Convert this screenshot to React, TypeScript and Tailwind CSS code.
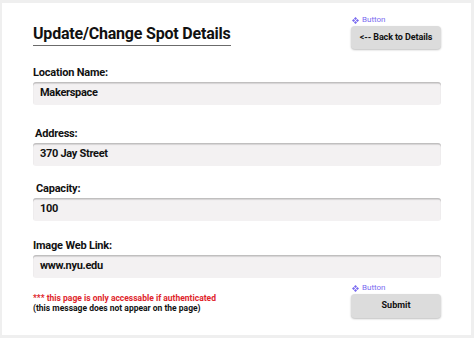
import React from "react";

function ButtonTag() {
  return (
    <div className="flex h-[10px] items-center gap-[3px] pl-[1px] text-[8px] leading-none text-[#7a6bf0]">
      <svg width="7" height="7" viewBox="0 0 10 10">
        <path d="M5 0 L7.2 2.2 L5 4.4 L2.8 2.2 Z M5 5.6 L7.2 7.8 L5 10 L2.8 7.8 Z M0 5 L2.2 2.8 L4.4 5 L2.2 7.2 Z M5.6 5 L7.8 2.8 L10 5 L7.8 7.2 Z" fill="#7a6bf0" />
      </svg>
      <span>Button</span>
    </div>
  );
}

function Field({ label, value, labelPad = "pl-0" }: { label: string; value: string; labelPad?: string }) {
  return (
    <div className="flex flex-col">
      <div className={`h-[12px] text-[11px] font-bold leading-[12px] tracking-[-0.2px] text-[#111] ${labelPad}`}>{label}</div>
      <div className="mt-[3px] flex h-[23px] w-[408px] items-center rounded-[3px] bg-[#f3f1f2] pl-[7px] text-[11px] font-bold tracking-[-0.3px] text-[#111] shadow-[inset_0_1.5px_1px_rgba(0,0,0,0.22)]">
        {value}
      </div>
    </div>
  );
}

export default function App() {
  return (
    <div className="h-[338px] w-[474px] bg-[#efefef] pb-[3px] pl-[2px] pr-[3px] pt-[3px]" style={{ fontFamily: "Roboto, 'Liberation Sans', sans-serif" }}>
      <div className="h-full w-full bg-white pl-[31px]">
        <div className="flex h-[46px] pt-[12px]">
          <div className="pt-[10px]">
            <div className="border-b-[1.5px] border-[#6b6b6b] pb-[2px] text-[16px] font-bold leading-[18px] tracking-[-0.2px] text-[#111]">
              Update/Change Spot Details
            </div>
          </div>
          <div className="ml-auto mr-[30px] flex flex-col">
            <ButtonTag />
            <button className="mt-[1px] h-[23px] w-[90px] rounded-[4px] bg-[#dcdcdc] text-[9px] font-bold tracking-[-0.1px] text-[#111] shadow-[0_1px_2px_rgba(0,0,0,0.25)]">
              &lt;-- Back to Details
            </button>
          </div>
        </div>
        <div className="mt-[18px] flex flex-col">
          <Field label="Location Name:" value="Makerspace" />
          <div className="mt-[23px]">
            <Field label="Address:" value="370 Jay Street" labelPad="pl-[2px]" />
          </div>
          <div className="mt-[17px]">
            <Field label="Capacity:" value="100" labelPad="pl-[3px]" />
          </div>
          <div className="mt-[19px]">
            <Field label="Image Web Link:" value="www.nyu.edu" />
          </div>
        </div>
        <div className="flex">
          <div className="pt-[15px] text-[8.5px] font-bold leading-[10px]">
            <div className="text-[#e0242a]">*** this page is only accessable if authenticated</div>
            <div className="text-[#111]">(this message does not appear on the page)</div>
          </div>
          <div className="ml-auto mr-[30px] flex flex-col pt-[5px]">
            <ButtonTag />
            <button className="mt-[1px] h-[24px] w-[90px] rounded-[4px] bg-[#dcdcdc] text-[9px] font-bold text-[#111] shadow-[0_1px_2px_rgba(0,0,0,0.25)]">
              Submit
            </button>
          </div>
        </div>
      </div>
    </div>
  );
}
